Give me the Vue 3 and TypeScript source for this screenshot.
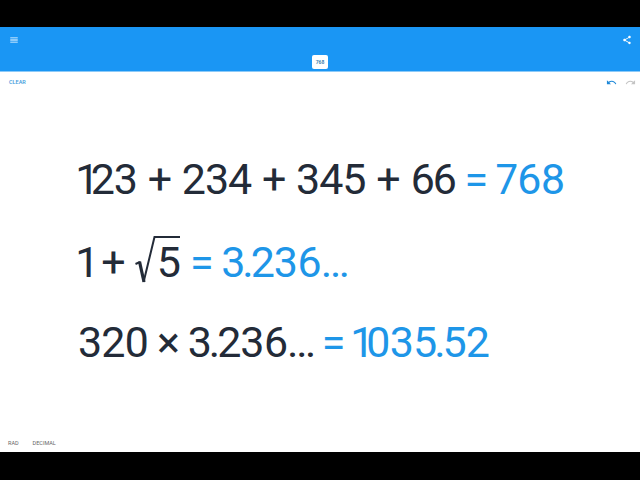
<script setup lang="ts">
interface Line { id: number; expr: string; result: string; root?: boolean }
interface Token { text: string; kind: string }

const lines: Line[] = [
  { id: 1, expr: '123 + 234 + 345 + 66', result: '= 768' },
  { id: 2, expr: '1 +', result: '= 3.236…', root: true },
  { id: 3, expr: '320 × 3.236…', result: '= 1035.52' },
]

const kinds: Record<string, string> = { '1': 'one', '.': 'dot', '…': 'dots', '×': 'times', '66': 'pair' }

function tokens(text: string): Token[] {
  return text
    .split(/(66|[1.…×])/)
    .filter((part) => part.length > 0)
    .map((part) => ({ text: part, kind: kinds[part] ?? 'plain' }))
}
</script>

<template>
  <div class="screen">
    <div class="app">
      <header class="bar">
        <div class="bar-top">
          <svg class="icon" viewBox="0 0 24 24" width="10" height="10" fill="#fff"><path d="M3 18h18v-2H3v2zm0-5h18v-2H3v2zm0-7v2h18V6H3z"/></svg>
          <svg class="icon" viewBox="0 0 24 24" width="10" height="10" fill="#fff"><path d="M18 16.08c-.76 0-1.44.3-1.96.77L8.91 12.7c.05-.23.09-.46.09-.7s-.04-.47-.09-.7l7.05-4.11c.54.5 1.25.81 2.04.81 1.66 0 3-1.34 3-3s-1.34-3-3-3-3 1.34-3 3c0 .24.04.47.09.7L8.04 9.81C7.5 9.31 6.79 9 6 9c-1.66 0-3 1.34-3 3s1.34 3 3 3c.79 0 1.5-.31 2.04-.81l7.12 4.16c-.05.21-.08.43-.08.65 0 1.61 1.31 2.92 2.92 2.92s2.92-1.31 2.92-2.92-1.31-2.92-2.92-2.92z"/></svg>
        </div>
        <div class="bar-tab"><span class="chip">768</span></div>
      </header>
      <div class="tools">
        <span class="clear">CLEAR</span>
        <div class="history">
          <svg viewBox="0 0 24 24" width="11" height="11" fill="#1e88d8"><path d="M12.5 8c-2.65 0-5.05.99-6.9 2.6L2 7v9h9l-3.62-3.62c1.39-1.16 3.16-1.88 5.12-1.88 3.54 0 6.55 2.31 7.6 5.5l2.37-.78C21.08 11.03 17.15 8 12.5 8z"/></svg>
          <svg viewBox="0 0 24 24" width="11" height="11" fill="#c4c4c4"><path d="M18.4 10.6C16.55 8.99 14.15 8 11.5 8c-4.65 0-8.58 3.03-9.96 7.22L3.9 16c1.05-3.19 4.05-5.5 7.6-5.5 1.95 0 3.73.72 5.12 1.88L13 16h9V7l-3.6 3.6z"/></svg>
        </div>
      </div>
      <main class="sheet">
        <div v-for="l in lines" :key="l.id" class="line" :class="{ tall: l.root }">
          <span class="expr"><span v-for="(t, i) in tokens(l.expr)" :key="i" :class="t.kind">{{ t.text }}</span></span>
          <span v-if="l.root" class="root">
            <svg class="radical" viewBox="0 0 22 48" width="22" height="48" fill="none" stroke="#232b38"><path d="M0.5 28 L5 26" stroke-width="2"/><path d="M4.5 25.5 L9 46" stroke-width="3.2"/><path d="M8.6 46 L19.5 1 L22 1" stroke-width="2"/></svg>
            <span class="radicand">5</span>
          </span>
          <span class="result"><span v-for="(t, i) in tokens(l.result)" :key="i" :class="t.kind">{{ t.text }}</span></span>
        </div>
      </main>
      <footer class="status">
        <span>RAD</span>
        <span>DECIMAL</span>
      </footer>
    </div>
  </div>
</template>

<style>
html, body { margin: 0; background: #000; }
</style>

<style scoped>
.screen {
  width: 640px;
  height: 480px;
  padding: 27px 0 28px;
  box-sizing: border-box;
  background: #000;
  font-family: Roboto, sans-serif;
}
.app {
  height: 100%;
  display: flex;
  flex-direction: column;
  background: #fff;
}
.bar {
  height: 45px;
  flex: none;
  background: #1a96f4;
  border-bottom: 1px solid #8ccaf8;
  box-sizing: border-box;
  display: flex;
  flex-direction: column;
}
.bar-top {
  display: flex;
  justify-content: space-between;
  padding: 8px 8px 0 9px;
}
.icon { display: block; }
.bar-tab {
  margin-top: auto;
  display: flex;
  justify-content: center;
  padding-bottom: 2px;
}
.chip {
  width: 16px;
  height: 14px;
  border-radius: 2px;
  background: #fff;
  color: #3f7fae;
  font-size: 5px;
  font-weight: 700;
  line-height: 14px;
  text-align: center;
}
.tools {
  flex: none;
  display: flex;
  justify-content: space-between;
  align-items: center;
  height: 20px;
  padding: 0 4px 0 9px;
}
.clear {
  color: #3e9bdc;
  font-size: 5.5px;
  font-weight: 500;
}
.history { display: flex; gap: 8.5px; }
.history svg { display: block; }
.sheet {
  flex: 1;
  display: flex;
  flex-direction: column;
  padding: 46px 0 0 78px;
}
.line {
  height: 81.5px;
  box-sizing: border-box;
  display: flex;
  align-items: center;
  gap: 10px;
  font-size: 43px;
  letter-spacing: -1px;
  font-variant-numeric: proportional-nums;
  color: #232b38;
  white-space: pre;
}
.line.tall { padding-top: 4px; }
.expr { word-spacing: 1px; }
.result { color: #1e96e8; word-spacing: -1px; }
.one { margin: 0 -4px 0 -1px; }
.dot { margin: 0 -2px; }
.dots { margin-right: -3px; }
.times { margin: 0 -2px; }
.pair { letter-spacing: -2.5px; }
.root { display: flex; align-items: flex-start; }
.radical { display: block; }
.radicand {
  border-top: 2px solid #232b38;
  line-height: 48px;
  padding-bottom: 2px;
}
.status {
  flex: none;
  display: flex;
  gap: 14px;
  padding: 0 0 6px 8px;
  color: #666;
  font-size: 5.5px;
}
</style>
